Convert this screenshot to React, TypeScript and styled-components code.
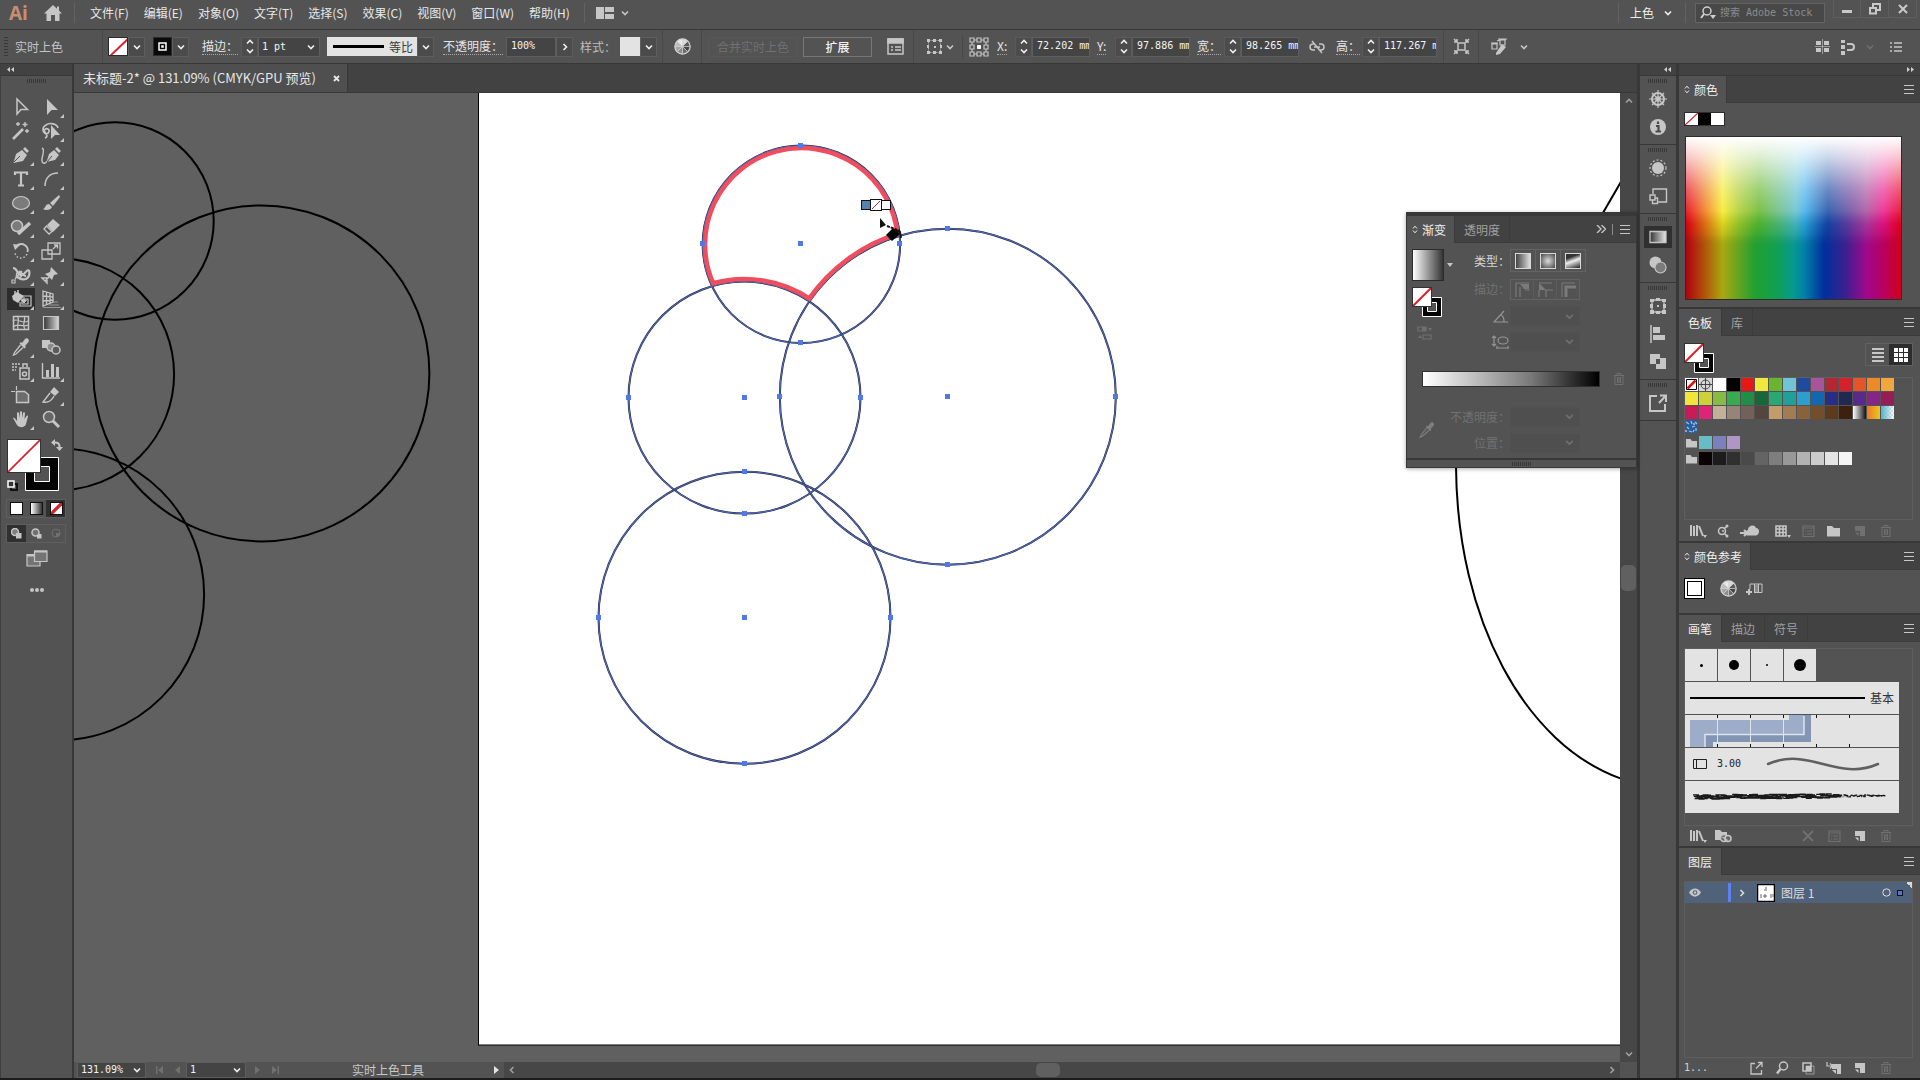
import React from "react";
import styled, { createGlobalStyle, css } from "styled-components";

/* ---------- tokens ---------- */

const c = {
  panel: "#535353",
  bar: "#424242",
  line: "#383838",
  field: "#444444",
  canvas: "#606060",
  text: "#e2e2e2",
  dim: "#a0a0a0",
  off: "#707070",
  icon: "#c6c6c6",
  anchor: "#5078e6",
};

const ui = `"Noto Sans CJK SC", "Noto Sans", sans-serif`;
const mono = `"DejaVu Sans Mono", "Noto Sans CJK SC", monospace`;

const GlobalStyle = createGlobalStyle`
  *, *::before, *::after { box-sizing: border-box; }
  html, body, #root { height: 100%; }
  body { margin: 0; background: ${c.panel}; overflow: hidden; }
  button, input, select { font: inherit; color: inherit; margin: 0; padding: 0; border: 0; background: none; border-radius: 0; }
  select { appearance: none; }
  svg { display: block; flex: none; }
`;

/* ---------- frame ---------- */

const Shell = styled.div`
  height: 100vh;
  display: flex;
  flex-direction: column;
  background: ${c.panel};
  border-bottom: 2px solid #1c1c1c;
  color: ${c.text};
  font: 12px/16px ${ui};
`;

const MenuBar = styled.header`
  display: flex;
  align-items: center;
  height: 30px;
  flex: none;
  padding: 0 3px 4px 9px;
  border-bottom: 1px solid ${c.line};
`;

const ControlBar = styled.div`
  display: flex;
  align-items: center;
  height: 34px;
  flex: none;
  padding: 0 14px 0 4px;
  border-bottom: 1px solid ${c.line};
  white-space: nowrap;
`;

const Workspace = styled.div`
  flex: 1;
  min-height: 0;
  display: grid;
  grid-template-columns: 74px minmax(0, 1fr) 39px 244px;
`;

/* ---------- shared pieces ---------- */

const Group = styled.div<{ $ml?: number; $gap?: number }>`
  display: flex;
  align-items: center;
  flex: none;
  margin-left: ${(p) => p.$ml ?? 0}px;
  gap: ${(p) => p.$gap ?? 0}px;
`;

const PushRight = styled(Group)`
  margin-left: auto;
`;

const Rule = styled.span<{ $h?: number; $light?: boolean }>`
  width: 1px;
  height: ${(p) => p.$h ?? 33}px;
  background: ${(p) => (p.$light ? "#626262" : "#484848")};
`;

const Grip = styled.span<{ $vertical?: boolean }>`
  flex: none;
  ${(p) =>
    p.$vertical
      ? css`
          width: 4px;
          height: 19px;
          background: repeating-linear-gradient(${c.line} 0 1px, transparent 1px 3px);
        `
      : css`
          width: 20px;
          height: 4px;
          background: repeating-linear-gradient(90deg, ${c.line} 0 1px, transparent 1px 2px);
        `}
`;

const IconButton = styled.button<{ $w?: number; $h?: number; $off?: boolean }>`
  display: grid;
  place-items: center;
  flex: none;
  width: ${(p) => p.$w ?? 20}px;
  height: ${(p) => p.$h ?? 20}px;
  color: ${(p) => (p.$off ? c.off : c.icon)};
`;

const TextButton = styled.button<{ $w: number; $off?: boolean }>`
  width: ${(p) => p.$w}px;
  height: 20px;
  line-height: 16px;
  border: 1px solid ${(p) => (p.$off ? "#575757" : "#777777")};
  color: ${(p) => (p.$off ? c.off : "#f2f2f2")};
  font-weight: ${(p) => (p.$off ? 400 : 500)};
`;

const FieldLabel = styled.label<{ $plain?: boolean }>`
  line-height: 16px;
  color: ${(p) => (p.$plain ? "#bdbdbd" : "#e6e6e6")};
  border-bottom: ${(p) => (p.$plain ? "0" : "1px dotted #a8a8a8")};
`;

const ChevButton = styled.button`
  display: grid;
  place-items: center;
  width: 17px;
  height: 20px;
  border: 1px solid #5e5e5e;
  color: #efefef;
  background: #4b4b4b;
`;

const NumberBox = styled.input<{ $w: number }>`
  width: ${(p) => p.$w}px;
  height: 20px;
  padding: 0 0 2px 4px;
  border: 1px solid #5e5e5e;
  background: ${c.field};
  color: #f4f4f4;
  font: 10px/16px ${mono};
`;

const StepBox = styled.span`
  display: flex;
  flex-direction: column;
  width: 17px;
  height: 20px;
  border: 1px solid #5a5a5a;
  background: #4c4c4c;
`;

const StepButton = styled.button`
  display: grid;
  place-items: center;
  height: 9px;
  color: #f0f0f0;
`;

const SelectFrame = styled.span<{ $w: number; $chev?: number; $h?: number; $bare?: boolean; $off?: boolean }>`
  display: grid;
  grid-template-columns: 1fr ${(p) => p.$chev ?? 17}px;
  align-items: center;
  width: ${(p) => p.$w}px;
  height: ${(p) => p.$h ?? 20}px;
  color: ${(p) => (p.$off ? "#6e6e6e" : "#efefef")};
  background: ${(p) => (p.$bare ? "none" : p.$off ? "#4f4f4f" : c.field)};
  border: ${(p) => (p.$bare ? "0" : p.$off ? "1px solid #515151" : "1px solid #5e5e5e")};
  select {
    grid-area: 1 / 1 / 2 / 3;
    width: 100%;
    height: 100%;
    padding-left: 3px;
    outline: none;
  }
  svg {
    grid-area: 1 / 2;
    justify-self: center;
    pointer-events: none;
  }
`;

const MonoSelectFrame = styled(SelectFrame)`
  select {
    font: 10px/14px ${mono};
    color: #f4f4f4;
  }
`;

type SvgProps = { w?: number; h?: number; box?: string; children?: React.ReactNode };
const Svg = ({ w = 20, h = w, box = "0 0 20 20", children }: SvgProps) => (
  <svg width={w} height={h} viewBox={box} fill="none" stroke="currentColor" strokeWidth="1.5" aria-hidden="true">
    {children}
  </svg>
);

const Chevron = ({ dir = "down", size = 8 }: { dir?: "down" | "up" | "left" | "right"; size?: number }) => {
  const turn = { down: 0, left: 90, up: 180, right: 270 }[dir];
  return (
    <Svg w={size} box="0 0 8 8">
      <path d="M1 2.5 4 5.5 7 2.5" strokeWidth="1.6" transform={`rotate(${turn} 4 4)`} />
    </Svg>
  );
};

const Stepper = ({ name }: { name: string }) => (
  <StepBox>
    <StepButton aria-label={`${name} +`}>
      <Chevron dir="up" />
    </StepButton>
    <StepButton aria-label={`${name} -`}>
      <Chevron />
    </StepButton>
  </StepBox>
);

const NoneSwatch = ({ w, h = w, weight = 2 }: { w: number; h?: number; weight?: number }) => (
  <svg width={w} height={h} viewBox="0 0 20 20" preserveAspectRatio="none" aria-hidden="true">
    <rect width="20" height="20" fill="#fff" />
    <path d="M0 20 20 0" stroke="#d8202c" strokeWidth={weight} />
  </svg>
);

const ColorWheel = ({ size = 17 }: { size?: number }) => (
  <Svg w={size} box="-10 -10 20 20">
    <circle r="9" fill="#8a8a8a" stroke="#cfcfcf" strokeWidth="1.5" />
    {["#dadada", "#5a5a5a", "#474747", "#6c6c6c", "#8d8d8d", "#a5a5a5", "#bcbcbc", "#e8e8e8"].map((f, i) => (
      <path key={f} d="M0 0 0-8.5A8.5 8.5 0 0 1 6-6Z" fill={f} stroke="#d5d5d5" strokeWidth=".7" transform={`rotate(${i * 45})`} />
    ))}
  </Svg>
);

const FillStroke = styled.span<{ $s: number; $shift: number }>`
  display: grid;
  width: ${(p) => p.$s + p.$shift}px;
  height: ${(p) => p.$s + p.$shift}px;
  > * {
    grid-area: 1 / 1;
  }
  > :first-child {
    margin: ${(p) => p.$shift}px 0 0 ${(p) => p.$shift}px;
  }
  > :last-child {
    outline: 1px solid #333;
    outline-offset: -1px;
  }
`;

const StrokeSquare = ({ s }: { s: number }) => {
  const a = Math.round(s / 4) + 0.5;
  const b = s - a;
  return (
    <svg width={s} height={s} viewBox={`0 0 ${s} ${s}`} aria-hidden="true">
      <path
        fillRule="evenodd"
        fill="#050505"
        stroke="#fff"
        d={`M.5 .5H${s - 0.5}V${s - 0.5}H.5ZM${a} ${a}H${b}V${b}H${a}Z`}
      />
    </svg>
  );
};

const Proxy = ({ size, shift, weight = 2 }: { size: number; shift: number; weight?: number }) => (
  <FillStroke $s={size} $shift={shift}>
    <StrokeSquare s={size} />
    <NoneSwatch w={size} weight={weight} />
  </FillStroke>
);

/* ---------- menu bar ---------- */

const Logo = styled.span`
  width: 34px;
  color: #c98e72;
  font: 700 19px/20px "Open Sans", "Noto Sans", sans-serif;
`;

const Menu = styled.nav`
  display: flex;
  gap: 15px;
  margin-left: 15px;
`;

const MenuItem = styled.button`
  line-height: 18px;
  color: #e8e8e8;
`;

const SearchBox = styled.label`
  display: flex;
  align-items: center;
  gap: 3px;
  width: 130px;
  height: 20px;
  padding-left: 4px;
  border: 1px solid #646464;
  background: #484848;
  color: #cfcfcf;
  input {
    width: 100px;
    outline: none;
    font: 10px/14px ${mono};
  }
  input::placeholder {
    color: #8c8c8c;
    opacity: 1;
  }
`;

const WindowButtons = styled.div`
  display: flex;
  align-self: flex-start;
  margin-left: 8px;
  color: #c9c9c9;
`;

const WindowButton = styled.button`
  display: grid;
  place-items: center;
  width: 28px;
  height: 18px;
  border: 1px solid #5e5e5e;
  border-top: 0;
  & + & {
    border-left: 0;
  }
`;

const MENUS = ["文件(F)", "编辑(E)", "对象(O)", "文字(T)", "选择(S)", "效果(C)", "视图(V)", "窗口(W)", "帮助(H)"];

const TopMenu = () => (
  <MenuBar>
    <Logo>Ai</Logo>
    <IconButton aria-label="主页">
      <Svg w={18} box="0 0 18 18">
        <path d="M9 1 0 9.5H2.5V17H7V11h4v6h4.5V9.5H18L15 6.6V2.5H13v2.3Z" fill="currentColor" stroke="none" />
      </Svg>
    </IconButton>
    <Group $ml={11}>
      <Rule $h={20} $light />
    </Group>
    <Menu>
      {MENUS.map((m) => (
        <MenuItem key={m}>{m}</MenuItem>
      ))}
    </Menu>
    <Group $ml={14} $gap={11}>
      <Rule $h={20} $light />
      <IconButton $w={18} aria-label="排列文档">
        <Svg w={18} h={12} box="0 0 18 12">
          <path d="M0 0H8V12H0ZM9 0H18V5H9ZM9 7H18V12H9Z" fill="currentColor" stroke="none" />
        </Svg>
      </IconButton>
    </Group>
    <IconButton $w={22} aria-label="排列选项">
      <Chevron />
    </IconButton>
    <PushRight>
      <Rule $h={20} $light />
      <Group $ml={8}>
        <SelectFrame $w={48} $chev={14} $bare>
          <select aria-label="工作区" defaultValue="上色">
            <option>上色</option>
          </select>
          <Chevron />
        </SelectFrame>
      </Group>
      <Group $ml={10} $gap={9}>
        <Rule $h={20} $light />
        <SearchBox>
          <Svg w={17} h={14} box="0 0 17 14">
            <circle cx="7" cy="5" r="4" />
            <path d="M4 8 1 12" strokeWidth="2" />
            <path d="M10 9h6l-3 4Z" fill="currentColor" stroke="none" />
          </Svg>
          <input placeholder="搜索 Adobe Stock" aria-label="搜索 Adobe Stock" />
        </SearchBox>
      </Group>
    </PushRight>
    <WindowButtons>
      <WindowButton aria-label="最小化">
        <Svg w={10} box="0 0 10 10">
          <path d="M0 7.5H10" strokeWidth="3" />
        </Svg>
      </WindowButton>
      <WindowButton aria-label="还原">
        <Svg w={12} box="0 0 12 12">
          <path d="M4 4V1H11V7H8M1 5H7V10.5H1Z" strokeWidth="2" />
        </Svg>
      </WindowButton>
      <WindowButton aria-label="关闭">
        <Svg w={10} box="0 0 10 10">
          <path d="M1 1 9 9M9 1 1 9" strokeWidth="2" />
        </Svg>
      </WindowButton>
    </WindowButtons>
  </MenuBar>
);

/* ---------- control bar ---------- */

const BarTitle = styled.h1`
  margin: 0;
  width: 87px;
  font: inherit;
  color: #c4c4c4;
`;

const SwatchButton = styled.button<{ $w: number }>`
  display: grid;
  place-items: center;
  width: ${(p) => p.$w}px;
  height: 19px;
  border: 1px solid #2b2b2b;
  overflow: hidden;
  background: #0a0a0a;
`;

const ProfileButton = styled.button`
  display: flex;
  align-items: center;
  gap: 5px;
  width: 90px;
  height: 19px;
  padding: 0 4px 0 6px;
  background: #e3e3e3;
  color: #3c3c3c;
  &::before {
    content: "";
    flex: 1;
    height: 3px;
    background: #000;
  }
`;

const StyleSwatch = styled.button`
  width: 20px;
  height: 19px;
  background: #e3e3e3;
`;

const Measure = ({ id, label, value }: { id: string; label: string; value: string }) => (
  <>
    <FieldLabel htmlFor={id}>{label}</FieldLabel>
    <Group>
      <Stepper name={label} />
      <NumberBox id={id} $w={58} defaultValue={value} />
    </Group>
  </>
);

const MeasureGroup = styled.div<{ $label: number; $ml: number }>`
  display: grid;
  grid-template-columns: ${(p) => p.$label}px auto;
  align-items: center;
  margin-left: ${(p) => p.$ml}px;
  label {
    justify-self: start;
  }
`;

const ControlStrip = () => (
  <ControlBar>
    <Grip $vertical />
    <Group $ml={7}>
      <BarTitle>实时上色</BarTitle>
      <Rule />
    </Group>
    <Group $ml={5}>
      <SwatchButton $w={20} aria-label="填色">
        <NoneSwatch w={20} h={19} />
      </SwatchButton>
      <ChevButton aria-label="填色选项">
        <Chevron />
      </ChevButton>
    </Group>
    <Group $ml={8}>
      <SwatchButton $w={19} aria-label="描边颜色">
        <Svg w={9} box="0 0 9 9">
          <path d="M1 1H8V8H1ZM4 4H5V5H4Z" stroke="#fff" />
        </Svg>
      </SwatchButton>
      <ChevButton aria-label="描边颜色选项">
        <Chevron />
      </ChevButton>
    </Group>
    <Group $ml={13} $gap={3}>
      <FieldLabel htmlFor="weight">描边：</FieldLabel>
      <Group>
        <Stepper name="描边粗细" />
        <MonoSelectFrame $w={62}>
          <select id="weight" defaultValue="1 pt">
            <option>1 pt</option>
          </select>
          <Chevron />
        </MonoSelectFrame>
      </Group>
    </Group>
    <Group $ml={7}>
      <ProfileButton>等比</ProfileButton>
      <ChevButton aria-label="宽度配置文件">
        <Chevron />
      </ChevButton>
    </Group>
    <Group $ml={9} $gap={3}>
      <FieldLabel htmlFor="opacity">不透明度：</FieldLabel>
      <Group>
        <NumberBox id="opacity" $w={50} defaultValue="100%" />
        <ChevButton aria-label="不透明度滑块">
          <Chevron dir="right" />
        </ChevButton>
      </Group>
    </Group>
    <Group $ml={7} $gap={4}>
      <FieldLabel $plain htmlFor="style">
        样式：
      </FieldLabel>
      <Group>
        <StyleSwatch id="style" aria-label="图形样式" />
        <ChevButton aria-label="样式选项">
          <Chevron />
        </ChevButton>
      </Group>
    </Group>
    <Group $ml={5} $gap={9}>
      <Rule />
      <IconButton aria-label="重新着色图稿">
        <ColorWheel />
      </IconButton>
      <Rule />
    </Group>
    <Group $ml={6} $gap={5}>
      <TextButton $w={90} $off disabled>
        合并实时上色
      </TextButton>
      <TextButton $w={69}>扩展</TextButton>
    </Group>
    <Group $ml={13} $gap={8}>
      <IconButton aria-label="间隙选项">
        <Svg w={17} box="0 0 17 17">
          <path d="M1 1H16V16H1Z" />
          <path d="M1 1H16V5H1Z" fill="currentColor" />
          <path d="M4 9H6M8 9h6M4 12H6M8 12h6" />
        </Svg>
      </IconButton>
      <Rule />
    </Group>
    <Group $ml={10}>
      <IconButton aria-label="对齐">
        <Svg w={17} box="0 0 17 17">
          <path d="M2.5 2.5H14.5V14.5H2.5Z" strokeWidth="1" strokeDasharray="2 1" opacity=".8" />
          <path d="M1 1H4V4H1ZM7 1h3V4H7ZM13 1h3V4H13ZM1 13H4v3H1ZM7 13h3v3H7ZM13 13h3v3H13ZM1 7H3v3H1ZM14 7h2v3H14ZM8 8h2v2H8Z" fill="currentColor" stroke="none" />
        </Svg>
      </IconButton>
      <IconButton $w={12} aria-label="对齐选项">
        <Chevron />
      </IconButton>
    </Group>
    <Group $ml={6} $gap={5}>
      <Rule $h={24} />
      <IconButton $w={22} aria-label="参考点">
        <Svg w={20} box="0 0 20 20">
          <path d="M1 1H5V5H1ZM8 1h4V5H8ZM15 1h4V5H15ZM1 8H5v4H1ZM15 8h4v4H15ZM1 15H5v4H1ZM8 15h4v4H8ZM15 15h4v4H15ZM5 3H8M12 3h3M3 5V8M17 5V8M3 12v3M17 12v3M5 17H8M12 17h3" strokeWidth="1.2" />
          <path d="M8.5 8.5h3v3H8.5Z" fill="#fff" stroke="#fff" strokeWidth="1" />
        </Svg>
      </IconButton>
    </Group>
    <MeasureGroup $label={18} $ml={7}>
      <Measure id="mx" label="X:" value="72.202 mm" />
    </MeasureGroup>
    <MeasureGroup $label={18} $ml={7}>
      <Measure id="my" label="Y:" value="97.886 mm" />
    </MeasureGroup>
    <MeasureGroup $label={27} $ml={7}>
      <Measure id="mw" label="宽：" value="98.265 mm" />
    </MeasureGroup>
    <Group $ml={8}>
      <IconButton aria-label="约束宽度和高度比例">
        <Svg w={16} box="0 0 16 16">
          <path d="M6 5H4a3 3 0 0 0 0 6H6M10 5h2a3 3 0 0 1 0 6H10M5 8h6M3 2 13 14" />
        </Svg>
      </IconButton>
    </Group>
    <MeasureGroup $label={26} $ml={9}>
      <Measure id="mh" label="高：" value="117.267 mm" />
    </MeasureGroup>
    <Group $ml={6} $gap={7}>
      <Rule />
      <IconButton aria-label="隔离选中的组">
        <Svg w={17} box="0 0 17 17">
          <path d="M5 5h7v7H5Z" />
          <path d="M1 1 4 4M16 1 13 4M1 16l3-3M16 16l-3-3M4 1V4H1M13 1V4h3M4 16V13H1M13 16V13h3" />
        </Svg>
      </IconButton>
      <Rule />
    </Group>
    <Group $ml={10} $gap={9}>
      <IconButton aria-label="选择类似对象">
        <Svg w={18} box="0 0 18 18">
          <path d="M2 6H7v5H2ZM10 2h5V7H10ZM1 5H8M7 3l3-1M8 1h9" strokeWidth="1.2" />
          <path d="M6 15 12 6l4 3-6 7-4 1Z" fill="currentColor" stroke="none" />
        </Svg>
      </IconButton>
      <IconButton $w={12} aria-label="类似对象选项">
        <Chevron />
      </IconButton>
    </Group>
    <PushRight $gap={6}>
      <IconButton aria-label="对齐像素网格">
        <Svg w={15} box="0 0 15 15">
          <path d="M1 2h5v4H1ZM9 2h5v4H9ZM1 9h5v4H1ZM9 9h5v4H9Z" fill="currentColor" stroke="none" />
          <path d="M7.5 0V15M0 7.5H15" strokeWidth="1" opacity=".6" />
        </Svg>
      </IconButton>
      <IconButton aria-label="贴齐">
        <Svg w={16} box="0 0 16 16">
          <path d="M1 1H5V4H1ZM1 6H5v4H1ZM1 12H5v4H1Z" fill="currentColor" stroke="none" />
          <path d="M7 5h4a3 3 0 0 1 0 6H7" strokeWidth="2" />
        </Svg>
      </IconButton>
      <IconButton $w={12} $off aria-label="贴齐选项">
        <Chevron />
      </IconButton>
      <Group $ml={4}>
        <IconButton aria-label="控制面板菜单">
          <Svg w={12} box="0 0 12 12">
            <path d="M0 2H2M4 2h8M0 6H2M4 6h8M0 10H2M4 10h8" strokeWidth="1.5" />
          </Svg>
        </IconButton>
      </Group>
    </PushRight>
  </ControlBar>
);

/* ---------- tool box ---------- */

const ToolColumn = styled.aside`
  display: flex;
  flex-direction: column;
  border-right: 2px solid ${c.line};
  border-left: 1px solid #404040;
`;

const StripHeader = styled.div<{ $end?: boolean; $pad?: number }>`
  display: flex;
  align-items: center;
  justify-content: ${(p) => (p.$end ? "flex-end" : "flex-start")};
  height: 12px;
  flex: none;
  padding: 0 ${(p) => p.$pad ?? 5}px;
  background: ${c.bar};
  border-bottom: 1px solid ${c.line};
  color: #d0d0d0;
`;

const Collapse = ({ right }: { right?: boolean }) => (
  <Svg w={8} h={5} box="0 0 8 5">
    <path
      d="M4 0V5L1 2.5ZM8 0V5L5 2.5Z"
      fill="currentColor"
      stroke="none"
      transform={right ? "rotate(180 4.5 2.5)" : undefined}
    />
  </Svg>
);

const GripRow = styled.div`
  display: grid;
  place-items: center;
  height: 9px;
`;

const ToolGrid = styled.div`
  display: grid;
  grid-template-columns: 30px 30px;
  grid-auto-rows: 24px;
  padding: 10px 5px 0;
`;

const ToolCell = styled.button<{ $on?: boolean }>`
  display: grid;
  place-items: center;
  margin: 1px;
  color: ${c.icon};
  background: ${(p) => (p.$on ? "#2d2d2d" : "none")};
`;

const SMALL_TRI = <path d="M23 17V21H19Z" fill="currentColor" stroke="none" />;

const fill = { fill: "currentColor", stroke: "none" } as const;

const DropperArt = () => (
  <>
    <path d="m11 6 3-4c2-2 5 1 3.5 3L14 9l1 1-1.5 1.5-5-5L10 5Z" {...fill} />
    <path d="m9.5 8-6 7.5L2.500 18 5 17l7-6.5" strokeWidth="1.3" />
  </>
);

const TOOLS: { name: string; more?: boolean; art: React.ReactNode }[] = [
  { name: "选择工具", art: <path d="M6 2V17L10 12.5H16.5Z" /> },
  { name: "直接选择工具", more: true, art: <path d="M6 2V18L10.5 13H17Z" {...fill} /> },
  {
    name: "魔棒工具",
    art: (
      <>
        <path d="M2 18 12 8" strokeWidth="2.6" />
        <path d="M7 1v4M5 3h4M14 1v5M11.5 3.5h5M16 8v4M14 10h4" strokeWidth="1.4" />
      </>
    ),
  },
  {
    name: "套索工具",
    more: true,
    art: (
      <>
        <path d="M5 13C1 11 1 6 5 4c4-3 11-1 12 3M5 13c3 0 4-4 2-5s-5 1-3 3 3 5 0 6" strokeWidth="1.6" />
        <path d="M10 4V18L14 14H19Z" {...fill} />
      </>
    ),
  },
  {
    name: "钢笔工具",
    more: true,
    art: (
      <>
        <path d="M2.5 18 5 9l6-4 5 5-4 6Z" {...fill} />
        <path d="M12 4 14 2l4 4-2 2Z" {...fill} />
        <path d="M3 17 9 11" stroke={c.panel} strokeWidth="1" />
      </>
    ),
  },
  {
    name: "曲率工具",
    more: true,
    art: (
      <>
        <path d="M1 3C5 5 0 12 1 16s4 2 5 0" strokeWidth="1.4" />
        <path d="M5.5 17 8 9l5-4 5 5-4 5Z" {...fill} />
        <path d="M14 4 16 2l4 4-2 2Z" {...fill} />
        <path d="M6 17l5-6" stroke={c.panel} strokeWidth="1" />
      </>
    ),
  },
  {
    name: "文字工具",
    more: true,
    art: <path d="M4 6V3.5H16V6M10 3.5V16M7 16.5h6" strokeWidth="2.2" />,
  },
  { name: "弧形工具", more: true, art: <path d="M4 17C4 9 9 4 17 4" /> },
  { name: "椭圆工具", more: true, art: <ellipse cx="10" cy="10" rx="8.5" ry="6.5" fill="#7b7b7b" strokeWidth="1.2" /> },
  {
    name: "画笔工具",
    more: true,
    art: (
      <>
        <path d="M18 2 9 10l3 3 7-9Z" {...fill} />
        <path d="M8 11c-4 0-3 4-6 5 3 2 8 1 9-2Z" {...fill} />
      </>
    ),
  },
  {
    name: "Shaper 工具",
    more: true,
    art: (
      <>
        <circle cx="6" cy="9" r="5.5" fill="#7b7b7b" />
        <path d="M7 17 19 6" strokeWidth="3.6" />
      </>
    ),
  },
  {
    name: "橡皮擦工具",
    more: true,
    art: (
      <>
        <path d="M6 8 12 2l7 6-7 7Z" {...fill} />
        <path d="M5.5 9 3 12l5 5 3-2.5Z" strokeWidth="1.3" />
      </>
    ),
  },
  {
    name: "旋转工具",
    more: true,
    art: (
      <>
        <path d="M5 5C12 0 18 6 16.5 11" strokeWidth="1.8" />
        <path d="M2 3 9 4 4 9Z" {...fill} />
        <path d="M16 13c-3 6-11 5-12-1" strokeDasharray="1.5 2" />
      </>
    ),
  },
  {
    name: "比例缩放工具",
    more: true,
    art: (
      <>
        <path d="M7 2H19V13H7ZM1 9h10v9H1Z" strokeWidth="1.3" />
        <path d="m12 8 4-4M13 4h3.500V7.500" strokeWidth="1.3" />
      </>
    ),
  },
  {
    name: "宽度工具",
    more: true,
    art: (
      <>
        <path d="M2 3c5 0 3 6 8 7 4 1 4-5 8-5M18 5c1 4 1 7-3 9-4 1-8-1-10-3" strokeWidth="2.2" />
        <path d="M8 6c3 3 5 5 7 5" strokeWidth="2.2" />
        <circle cx="8" cy="10" r="2.5" />
        <path d="M1 15h3v3H1ZM4 14 11 6" strokeWidth="1.2" />
      </>
    ),
  },
  {
    name: "操控变形工具",
    more: true,
    art: (
      <>
        <path d="m10 2 7 7-4 1-2 5-3-3-4-3 5-2Z" {...fill} />
        <path d="M8 12 4 16M1 13h5v5Z" strokeWidth="1.4" />
      </>
    ),
  },
  {
    name: "实时上色工具",
    more: true,
    art: (
      <>
        <path d="M1 7 6 3l7 4-6 7-5-3Z" {...fill} />
        <path d="M4 2v4M7 1v4" />
        <path d="M12 7h8v10H9V13M11 10h6v5h-6Z" strokeWidth="1.2" />
        <path d="M13 8v5M10.5 11l2.5 3 2.500-3Z" fill="currentColor" strokeWidth="1" />
      </>
    ),
  },
  {
    name: "透视网格工具",
    more: true,
    art: (
      <>
        <path d="M2 2V17L12 13V5ZM2 7l10 1M2 12l10-1M5.5 3v12.500M9 4v10" strokeWidth="1.3" />
        <path d="M12 13h5M8 16h10M2 18.5H20" strokeWidth="1" opacity=".6" />
      </>
    ),
  },
  {
    name: "网格工具",
    art: (
      <>
        <path d="M2.5 3.5h15v13h-15Z" />
        <path d="M2 8c5-4 9 4 15 0M2 14c5-5 9 1 15-2M6 3c4 4-1 8 1 13M13 3c3 4-3 8 1 13" strokeWidth="1.2" />
      </>
    ),
  },
  {
    name: "渐变工具",
    art: (
      <>
        <defs>
          <linearGradient id="toolGrad">
            <stop offset="0" stopColor="#333" />
            <stop offset="1" stopColor="#d8d8d8" />
          </linearGradient>
        </defs>
        <path d="M2.5 3.5h15v13h-15Z" fill="url(#toolGrad)" strokeWidth="1.2" />
      </>
    ),
  },
  { name: "吸管工具", more: true, art: <DropperArt /> },
  {
    name: "混合工具",
    art: (
      <>
        <path d="M1 3h8v8H1Z" {...fill} />
        <circle cx="10" cy="10" r="4" fill="#8a8a8a" />
        <circle cx="15" cy="13" r="4" fill="#5a5a5a" />
      </>
    ),
  },
  {
    name: "符号喷枪工具",
    more: true,
    art: (
      <>
        <path d="M9 7h9v11H9ZM12 6V3h4v3" />
        <circle cx="13.5" cy="13" r="2" />
        <path d="M1 3h8M1 6h6M1 9h4" strokeDasharray="2 1" />
      </>
    ),
  },
  {
    name: "柱形图工具",
    more: true,
    art: (
      <>
        <path d="M1.5 2V17H19" strokeWidth="1.4" />
        <path d="M5 9h3v7H5ZM10 3h3V16H10ZM15 6h3V16H15Z" {...fill} />
      </>
    ),
  },
  {
    name: "画板工具",
    art: (
      <>
        <path d="M5.5 6.5h8l4 3v8h-12Z" fill="#6d6d6d" />
        <path d="M0 6.5H4M5.5 1V5" strokeWidth="1.2" />
      </>
    ),
  },
  {
    name: "切片工具",
    more: true,
    art: (
      <>
        <path d="M13 2 18 7l-4 4-5-4Z" {...fill} />
        <path d="M9 8 2 17c5 1 9-2 11-6" strokeWidth="1.4" />
      </>
    ),
  },
  {
    name: "抓手工具",
    more: true,
    art: <path d="M2 9c1-1 2 0 4 3V4c0-1 2-1 2 0l.5 5L9 3c0-1 2-1 2 0v6l1-5c0-1 2-1 2 0l-.5 6L15.500 7c.5-1 2-.5 1.500.5L15 15c-1 4-7 4-9 1Z" {...fill} />,
  },
  {
    name: "缩放工具",
    art: (
      <>
        <circle cx="8" cy="8" r="5.5" fill="#666" />
        <path d="m12 12 6 6" strokeWidth="3" />
      </>
    ),
  },
];

const ColorArea = styled.div`
  display: grid;
  grid-template-columns: 44px auto;
  padding: 8px 6px 0;
`;

const ProxyCell = styled.div`
  grid-area: 1 / 1 / 2 / 3;
`;

const SwapCell = styled.div`
  grid-area: 1 / 2;
  color: ${c.icon};
`;

const DefaultIcon = styled.button`
  grid-area: 1 / 1;
  align-self: end;
  justify-self: start;
  width: 11px;
  height: 11px;
`;

const ModeRow = styled.div<{ $top: number }>`
  display: grid;
  grid-template-columns: repeat(3, 20px);
  height: 19px;
  width: 60px;
  margin: ${(p) => p.$top}px 0 0 5px;
  outline: 1px solid #5f5f5f;
  outline-offset: -1px;
`;

const ModeCell = styled.button<{ $on?: boolean; $off?: boolean }>`
  display: grid;
  place-items: center;
  color: ${(p) => (p.$off ? c.off : c.icon)};
  background: ${(p) => (p.$on ? "#303030" : "none")};
`;

const Chip = styled.span<{ $bg: string }>`
  display: block;
  width: 13px;
  height: 13px;
  border: 1px solid #111;
  background: ${(p) => p.$bg};
  overflow: hidden;
`;

const CenterRow = styled.div<{ $h: number }>`
  display: grid;
  place-items: center;
  height: ${(p) => p.$h}px;
  color: ${c.icon};
`;

const DrawMode = ({ solid }: { solid?: boolean }) => (
  <Svg w={11} box="0 0 11 11">
    {solid ? (
      <>
        <circle cx="4" cy="4" r="3.5" fill="#808080" />
        <path d="M5 5h5.5v5.5H5Z" {...fill} />
      </>
    ) : (
      <>
        <path d="M6 6h4.500v4.500H6Z" {...fill} />
        <circle cx="4.500" cy="4.500" r="3.5" fill="#707070" />
      </>
    )}
  </Svg>
);

const Toolbox = () => (
  <ToolColumn>
    <StripHeader>
      <Collapse />
    </StripHeader>
    <GripRow>
      <Grip />
    </GripRow>
    <ToolGrid>
      {TOOLS.map((t) => (
        <ToolCell key={t.name} aria-label={t.name} $on={t.name === "实时上色工具"}>
          <Svg w={28} h={22} box="-4 -1 28 22">
            {t.art}
            {t.more && SMALL_TRI}
          </Svg>
        </ToolCell>
      ))}
    </ToolGrid>
    <ColorArea>
      <ProxyCell>
        <Proxy size={34} shift={18} weight={1} />
      </ProxyCell>
      <DefaultIcon aria-label="默认填色和描边">
        <Svg w={11} box="0 0 11 11">
          <path d="M4 4h6v6H4Z" stroke="#111" strokeWidth="2" />
          <path d="M1 1H7V7H1Z" fill="#333" stroke="#fff" strokeWidth="1.5" />
        </Svg>
      </DefaultIcon>
      <SwapCell>
        <Svg w={12} box="0 0 12 12">
          <path d="M3 3.500C7 3 9 5 8.500 9" strokeWidth="2" />
          <path d="M0 3.500 4 0V7ZM5 8h7L8.500 12Z" {...fill} />
        </Svg>
      </SwapCell>
    </ColorArea>
    <ModeRow $top={8}>
      <ModeCell aria-label="颜色">
        <Chip $bg="#fff" />
      </ModeCell>
      <ModeCell aria-label="渐变">
        <Chip $bg="linear-gradient(90deg,#fff,#333)" />
      </ModeCell>
      <ModeCell $on aria-label="无">
        <Chip $bg="#fff">
          <NoneSwatch w={11} weight={6} />
        </Chip>
      </ModeCell>
    </ModeRow>
    <ModeRow $top={6}>
      <ModeCell $on aria-label="正常绘图">
        <DrawMode solid />
      </ModeCell>
      <ModeCell aria-label="背面绘图">
        <DrawMode />
      </ModeCell>
      <ModeCell $off aria-label="内部绘图">
        <Svg w={11} box="0 0 11 11">
          <circle cx="5" cy="5" r="4" strokeWidth="1" />
          <path d="M5 5h4v2l-2 2H5Z" {...fill} />
        </Svg>
      </ModeCell>
    </ModeRow>
    <CenterRow $h={30}>
      <Svg w={22} h={17} box="0 0 22 17">
        <path d="M1 4.500h13V16H1Z" fill="#747474" strokeWidth="1.2" />
        <path d="M8.500 1H21V11.500H8.500Z" fill="#747474" strokeWidth="1.2" />
        <path d="M8.500 1.500H21M1 5.500H8" strokeWidth="2" />
      </Svg>
    </CenterRow>
    <CenterRow $h={33}>
      <Svg w={14} h={4} box="0 0 14 4">
        <circle cx="2" cy="2" r="2" {...fill} />
        <circle cx="7" cy="2" r="2" {...fill} />
        <circle cx="12" cy="2" r="2" {...fill} />
      </Svg>
    </CenterRow>
  </ToolColumn>
);

/* ---------- document ---------- */

const DocumentArea = styled.main`
  position: relative;
  min-width: 0;
  display: flex;
  flex-direction: column;
`;

const TabStrip = styled.div`
  display: flex;
  height: 29px;
  flex: none;
  background: ${c.bar};
  border-bottom: 1px solid ${c.line};
`;

const DocTab = styled.div`
  display: flex;
  align-items: center;
  gap: 16px;
  padding: 0 5px 0 9px;
  background: #4f4f4f;
  color: #e6e6e6;
  font-size: 13px;
  border-right: 1px solid ${c.line};
`;

const Stage = styled.div`
  flex: 1;
  min-height: 0;
  display: grid;
  grid-template-columns: minmax(0, 1fr) 17px;
`;

const Canvas = styled.div`
  background: ${c.canvas};
  overflow: hidden;
  min-height: 0;
`;

const VScroll = styled.div`
  display: flex;
  flex-direction: column;
  align-items: center;
  background: #474747;
  padding: 4px 0;
  color: ${c.dim};
`;

const Spacer = styled.span<{ $n?: number }>`
  flex: ${(p) => p.$n ?? 1};
`;

const VThumb = styled.span`
  width: 15px;
  height: 26px;
  border-radius: 5px;
  background: #606060;
`;

const HThumb = styled.span`
  width: 24px;
  height: 14px;
  border-radius: 5px;
  background: #606060;
`;

const StatusBar = styled.footer`
  display: flex;
  align-items: center;
  height: 16px;
  flex: none;
  padding-right: 17px;
  padding-left: 3px;
  color: #e0e0e0;
`;

const StatusText = styled.span`
  width: 207px;
  padding-left: 69px;
  color: #c8c8c8;
  line-height: 18px;
`;

const HScroll = styled.div`
  flex: 1;
  display: flex;
  align-items: center;
  height: 16px;
  padding: 0 4px;
  background: #474747;
  color: ${c.dim};
`;

const ARTBOARD_CIRCLES = [
  { x: 801.4, y: 244.3, r: 98.7 },
  { x: 947.8, y: 396.7, r: 168 },
  { x: 744.5, y: 397.6, r: 116 },
  { x: 744.5, y: 617.7, r: 146 },
];

const ANCHORS = ARTBOARD_CIRCLES.flatMap(({ x, y, r }, i) => [
  [x, y],
  ...(i === 2 ? [] : [[x, y - r]]),
  [x, y + r],
  [x - r, y],
  [x + r, y],
]);

const REGION = "M711.9 285.9A98.7 98.7 0 1 1 899.8 235.6A168 168 0 0 0 809.9 301.4A116 116 0 0 0 711.9 285.9Z";

const Drawing = () => (
  <svg width="100%" height="100%" aria-label="画稿">
    <defs>
      <clipPath id="region">
        <path d={REGION} />
      </clipPath>
    </defs>
    <g transform="translate(-74 -93)" fill="none">
      <rect x="478.5" y="80" width="2000" height="965" fill="#fff" stroke="#000" />
      <g stroke="#000" strokeWidth="2">
        {ARTBOARD_CIRCLES.map(({ x, y, r }) => (
          <circle key={`${x}${y}`} cx={x - 686.4} cy={y - 23.3} r={r} />
        ))}
        <path d="M1456 466C1457 620 1525 745 1622 779M1622 180 1600 218" />
      </g>
      {ARTBOARD_CIRCLES.map(({ x, y, r }) => (
        <g key={`${x}-${y}`}>
          <circle cx={x} cy={y} r={r} stroke="#1f2338" strokeWidth="2" />
          <circle cx={x} cy={y} r={r} stroke="#4f67b4" strokeWidth="1.2" />
        </g>
      ))}
      <path d={REGION} stroke="#f04e5e" strokeWidth="9" clipPath="url(#region)" />
      <g fill={c.anchor}>
        {ANCHORS.map(([x, y]) => (
          <rect key={`${x},${y}`} x={Math.floor(x - 2.5)} y={Math.floor(y - 2.5)} width="5" height="5" />
        ))}
      </g>
      <g stroke="#111" strokeWidth="1">
        <rect x="861.5" y="200.5" width="9" height="9" fill="#5580b0" />
        <rect x="880.5" y="200.5" width="10" height="9" fill="#fff" />
        <rect x="870.5" y="199.5" width="11" height="11" fill="#fff" />
        <path d="M872 209 880 201" stroke="#a03048" />
      </g>
      <path d="M880 218 886 225 880 228Z" fill="#111" />
      <path d="M886 235 893 228 900 234 892 241Z" fill="#000" />
      <path d="M887 226 900 231" stroke="#111" strokeWidth="2" strokeDasharray="3 1" />
      <path d="M894 230 900 232 901 238" stroke="#111" strokeWidth="2" />
    </g>
  </svg>
);

/* ---------- panels ---------- */

const PanelTabs = styled.div`
  display: flex;
  height: 27px;
  flex: none;
  background: ${c.bar};
  border-bottom: 1px solid #3b3b3b;
`;

const PanelTab = styled.button<{ $on?: boolean; $fold?: boolean }>`
  display: flex;
  align-items: center;
  gap: 4px;
  height: 27px;
  padding: 0 ${(p) => (p.$fold ? 8 : 9)}px 0 ${(p) => (p.$fold ? 5 : 9)}px;
  border-right: 1px solid #3b3b3b;
  background: ${(p) => (p.$on ? c.panel : "none")};
  color: ${(p) => (p.$on ? "#f0f0f0" : c.dim)};
`;

const MenuSlot = styled.span`
  display: flex;
  align-items: center;
  gap: 6px;
  margin-left: auto;
  padding-right: 5px;
  color: ${c.icon};
`;

const FoldMark = () => (
  <Svg w={6} h={9} box="0 0 6 9">
    <path d="M1 3.5 3 1.2 5 3.5M1 5.5 3 7.8 5 5.5" strokeWidth="1" />
  </Svg>
);

const PanelMenu = () => (
  <IconButton $w={12} aria-label="面板菜单">
    <Svg w={10} h={9} box="0 0 10 9">
      <path d="M0 .5H10M0 4.5H10M0 8.5H10" strokeWidth="1" />
    </Svg>
  </IconButton>
);

const Tabs = ({ items, fold }: { items: string[]; fold?: boolean }) => (
  <PanelTabs>
    {items.map((t, i) => (
      <PanelTab key={t} $on={i === 0} $fold={fold && i === 0}>
        {fold && i === 0 && <FoldMark />}
        {t}
      </PanelTab>
    ))}
    <MenuSlot>
      <PanelMenu />
    </MenuSlot>
  </PanelTabs>
);

const Panel = styled.section<{ $grow?: boolean }>`
  display: flex;
  flex-direction: column;
  flex: ${(p) => (p.$grow ? "1" : "none")};
  min-height: 0;
  border-bottom: ${(p) => (p.$grow ? "0" : `2px solid ${c.line}`)};
`;

const ListBox = styled.div<{ $h?: number; $top?: number }>`
  display: flex;
  flex-direction: column;
  margin: ${(p) => p.$top ?? 0}px 7px 0 5px;
  border: 1px solid #5e5e5e;
  ${(p) => (p.$h ? `min-height: ${p.$h}px;` : "flex: 1;")}
`;

const PanelFooter = styled.div<{ $h: number }>`
  display: flex;
  align-items: center;
  height: ${(p) => p.$h}px;
  flex: none;
  padding: 0 21px 0 5px;
`;

const ART: Record<string, React.ReactNode> = {
  library: (
    <>
      <path d="M2 2v11M5 3v10M8 2v11" strokeWidth="2" />
      <path d="m10 3 4 10" strokeWidth="2" />
      <path d="M14 12h4l-2 3Z" {...fill} />
    </>
  ),
  theme: (
    <>
      <circle cx="7" cy="8" r="3.5" />
      <path d="m9 6 3-3M9 10l3 3M7 8h2" />
      <circle cx="12" cy="3" r="1.5" {...fill} />
      <circle cx="12" cy="13" r="1.5" {...fill} />
    </>
  ),
  cloud: (
    <>
      <path d="M5 12C4 8 6 7 7 7c0-5 7-6 8-2 4 0 4 7 0 7.500H6Z" {...fill} />
      <path d="M-1 10H5M3 7l3 3-3 3" strokeWidth="2" />
    </>
  ),
  kinds: (
    <>
      <path d="M2 3H12V13H2ZM2 6h10M2 9.5h10M5.5 3V13M9 3V13" strokeWidth="1.6" />
      <path d="M13 12h4l-2 3Z" {...fill} />
    </>
  ),
  options: <path d="M3 3H14V13.5H3ZM3 5h11M5 8h1M7 8h5M5 11h1M7 11h5" strokeWidth="1.2" />,
  folder: <path d="M1 3H6L8 5h6v8.500H1Z" {...fill} />,
  fresh: <path d="M3 3H13V13H8V8H3ZM3 9.500H6.500V13Z" {...fill} />,
  trash: <path d="M3 4.5H13M6 4V2.5h4V4M4 5v8.500h8V5M6.5 6v6M8 6v6M9.5 6v6" strokeWidth="1" />,
  cut: <path d="m3 3 10 10M13 3 3 13" strokeWidth="2" />,
  ccfolder: (
    <>
      <path d="M0 2H5l2 2h5v3L6 12H0Z" {...fill} />
      <circle cx="9" cy="10" r="3.5" fill="#666" />
      <circle cx="13" cy="10.5" r="3" fill="#666" />
      <path d="m7.500 9 5 3.500" />
    </>
  ),
  exportOut: <path d="M7 3.500H3V14H13.500V10M10 2.500h4V7M14 2.500 8 8.500" strokeWidth="1.3" />,
  find: (
    <>
      <circle cx="9.5" cy="6" r="4" />
      <path d="M6.5 9 3 13.500" strokeWidth="2.5" />
    </>
  ),
  mask: (
    <>
      <path d="M3 3h8v8H3Z" strokeWidth="1.5" />
      <path d="M6 6h8v8H6Z" strokeWidth="1" opacity=".6" />
      <path d="M6 6h5v5H6Z" {...fill} />
    </>
  ),
  sublayer: (
    <>
      <path d="M6 4H15V14H11V9H6ZM6 10H10V14Z" {...fill} />
      <path d="M1 2V6H6M4 3.500 6.500 6 4 8.500" strokeWidth="1.2" />
    </>
  ),
};

const FootIcon = ({ art, name, off }: { art: string; name: string; off?: boolean }) => (
  <IconButton $w={26} $h={16} $off={off} aria-label={name}>
    <Svg w={20} h={16} box="-2 0 20 16">
      {ART[art]}
    </Svg>
  </IconButton>
);

/* colour */

const ColorBody = styled.div`
  display: flex;
  flex-direction: column;
  gap: 10px;
  padding: 9px 18px 7px 5px;
`;

const QuickSwatches = styled.div`
  display: flex;
  width: 41px;
  height: 14px;
  border: 1px solid #2b2b2b;
`;

const Quick = styled.button<{ $bg: string }>`
  flex: 1;
  background: ${(p) => p.$bg};
  overflow: hidden;
`;

const Spectrum = styled.div`
  display: grid;
  height: 164px;
  margin-left: 1px;
  border: 1px solid #2c2c2c;
  background: linear-gradient(90deg, #e60012 0%, #f08a1c 10%, #f6ea28 17%, #a8cc30 25%, #68b82c 34%, #68bc8c 44%, #62c0cc 51%, #40b0ec 55%, #1d4ea4 66%, #6a4aa0 76%, #a8509e 84%, #ec1c8c 92%, #e60020 100%);
  &::before,
  &::after {
    content: "";
    grid-area: 1 / 1;
  }
  &::before {
    background: linear-gradient(90deg, #b00012 0%, #b05808 9%, #a8a810 17%, #22a030 32%, #10a050 42%, #089890 50%, #0080a8 55%, #00309c 64%, #3a2090 74%, #a0088c 84%, #b80060 92%, #d00018 100%);
    mask-image: linear-gradient(transparent 46%, #000 68%);
  }
  &::after {
    background: linear-gradient(#fff 0%, rgba(255, 255, 255, 0.78) 12%, rgba(255, 255, 255, 0.35) 32%, transparent 54%, transparent 60%, rgba(0, 0, 0, 0.55) 76%, #000 99%);
  }
`;

/* swatches */

const SwatchHead = styled.div`
  display: flex;
  justify-content: space-between;
  align-items: flex-start;
  padding: 7px 7px 4px 5px;
`;

const ViewToggle = styled.div`
  display: flex;
  border: 1px solid #616161;
`;

const ViewButton = styled.button<{ $on?: boolean }>`
  display: grid;
  place-items: center;
  width: 23px;
  height: 21px;
  color: ${(p) => (p.$on ? "#fff" : c.icon)};
  background: ${(p) => (p.$on ? "#2d2d2d" : "none")};
`;

const SwatchRow = styled.div<{ $top?: number }>`
  display: flex;
  gap: 1px;
  height: 13px;
  margin-top: ${(p) => p.$top ?? 1}px;
  color: ${c.icon};
`;

const Swatch = styled.button<{ $bg: string }>`
  display: grid;
  place-items: center;
  width: 13px;
  height: 13px;
  background: ${(p) => p.$bg};
`;

const ROW_ONE = ["#ffffff", "#050000", "#e71818", "#f0e83c", "#69b52f", "#70c4d4", "#1f4aa0", "#a7549b", "#b22832", "#d8202a", "#e2562a", "#ec8a2a", "#f2a640"];
const ROW_TWO = ["#f2e43a", "#ced23a", "#86bc44", "#38aa50", "#1f8f48", "#156838", "#28a874", "#20a098", "#2c9fd0", "#1168b0", "#2a2d86", "#202a50", "#5a2a88", "#862488", "#981c58"];
const ROW_THREE = [
  "#c81c58", "#dc2478", "#c2b09a", "#958478", "#726158", "#54463f", "#c49c6c", "#a27c54", "#88623a", "#744e28", "#5e3a1c", "#3e200e",
  "linear-gradient(90deg,#fff,#111)",
  "linear-gradient(90deg,#ec7a28,#e8c820)",
  "linear-gradient(90deg,#50b4cc,rgba(255,255,255,.2)),repeating-conic-gradient(#ddd 0 25%,#fff 0 50%) 0 0/4px 4px",
];
const BRIGHTS = ["#68bcc4", "#7c80bc", "#b096c4"];
const GRAYS = ["#0a0204", "#1c1c1c", "#303030", "#4a4a4a", "#646464", "#7e7e7e", "#989898", "#b2b2b2", "#cccccc", "#e4e4e4", "#f4f4f4"];

const Folder = () => (
  <Svg w={13} box="0 0 13 13">
    <path d="M1 3H5.500L7 5h5v6.500H1Z" {...fill} />
  </Svg>
);

const SwatchList = ({ colors }: { colors: string[] }) => (
  <>
    {colors.map((bg) => (
      <Swatch key={bg} $bg={bg} aria-label="色板" />
    ))}
  </>
);

/* guide */

const GuideBody = styled.div`
  display: flex;
  align-items: center;
  gap: 15px;
  padding: 8px 5px 14px;
  color: ${c.icon};
`;

const BaseColor = styled.button`
  width: 21px;
  height: 21px;
  border: 1px solid #000;
  background: #fff;
  padding: 2px;
  &::before {
    content: "";
    display: block;
    height: 100%;
    border: 1px solid #000;
  }
`;

/* brushes */

const BrushTiles = styled.div`
  display: flex;
  gap: 1px;
`;

const BrushTile = styled.button`
  display: grid;
  place-items: center;
  width: 32px;
  height: 32px;
  background: #e3e3e3;
`;

const Dot = styled.span<{ $d: number }>`
  width: ${(p) => p.$d}px;
  height: ${(p) => p.$d}px;
  border-radius: 50%;
  background: #000;
`;

const BrushRow = styled.button`
  display: flex;
  align-items: center;
  width: 214px;
  height: 32px;
  margin-top: 1px;
  background: #e3e3e3;
  color: #333;
`;

const BasicBrush = styled(BrushRow)`
  gap: 5px;
  padding: 0 5px;
  &::before {
    content: "";
    flex: 1;
    height: 2px;
    background: #000;
  }
`;

const BristleBrush = styled(BrushRow)`
  padding-left: 8px;
  gap: 10px;
  color: #222;
  font: 10px/14px ${mono};
`;

const charcoal = Array.from({ length: 240 }, (_, i) => {
  const n = Math.abs(Math.sin(i * 12.9898) * 43758.5453) % 1;
  const m = Math.abs(Math.sin(i * 78.233) * 12543.123) % 1;
  const t = i / 240;
  const spread = t < 0.7 ? 4.4 : 4 * (1 - t) + 1.5;
  const len = t < 0.75 ? 6 : 3 * n;
  return `M${(8 + t * 192).toFixed(1)} ${(16 - t * 1.5 + (m - 0.5) * spread).toFixed(1)}h${len.toFixed(1)}`;
}).join("");

/* layers */

const LayerRow = styled.div`
  display: flex;
  align-items: center;
  height: 21px;
  background: #50627a;
  color: #dcdcdc;
`;

const LayerMark = styled.span`
  width: 3px;
  height: 19px;
  margin: 0 7px 0 23px;
  background: #5c82f0;
`;

const LayerName = styled.span`
  margin-left: 6px;
  flex: 1;
`;

const TargetSquare = styled.span`
  width: 6px;
  height: 6px;
  margin: 0 3px 0 6px;
  border: 1px solid #111;
  background: #4f74dc;
`;

const SelectedCorner = styled.span`
  align-self: flex-start;
  width: 6px;
  height: 6px;
  background: linear-gradient(to top right, transparent 50%, #d8d8d8 50%);
`;

const LayerCount = styled.span`
  font: 10px/16px ${mono};
  color: #d4d4d4;
`;

const RightColumn = styled.aside`
  display: flex;
  flex-direction: column;
  min-height: 0;
  border-left: 3px solid ${c.line};
`;

const RightPanels = () => (
  <RightColumn>
    <StripHeader $end $pad={6}>
      <Collapse right />
    </StripHeader>

    <Panel>
      <Tabs items={["颜色"]} fold />
      <ColorBody>
        <QuickSwatches>
          <Quick $bg="#fff" aria-label="无">
            <NoneSwatch w={13} h={12} />
          </Quick>
          <Quick $bg="#000" aria-label="黑色" />
          <Quick $bg="#fff" aria-label="白色" />
        </QuickSwatches>
        <Spectrum />
      </ColorBody>
    </Panel>

    <Panel>
      <Tabs items={["色板", "库"]} />
      <SwatchHead>
        <Proxy size={20} shift={10} />
        <ViewToggle>
          <ViewButton aria-label="列表视图">
            <Svg w={12} h={14} box="0 0 12 14">
              <path d="M0 1H12M0 5H12M0 9H12M0 13H12" strokeWidth="2" />
            </Svg>
          </ViewButton>
          <ViewButton $on aria-label="缩览图视图">
            <Svg w={14} box="0 0 14 14">
              <path d="M0 0H4V4H0ZM5 0H9V4H5ZM10 0h4V4H10ZM0 5H4V9H0ZM5 5H9V9H5ZM10 5h4V9H10ZM0 10H4v4H0ZM5 10H9v4H5ZM10 10h4v4H10Z" {...fill} />
            </Svg>
          </ViewButton>
        </ViewToggle>
      </SwatchHead>
      <ListBox $h={143}>
        <SwatchRow $top={0}>
          <Swatch $bg="#fff" aria-label="无">
            <Svg w={13} box="0 0 13 13">
              <path d="M2.500 10.500 10.500 2.500" stroke="#e01010" strokeWidth="2.5" />
              <path d="M1.5 1.5h10v10h-10Z" stroke="#000" strokeWidth="1" />
            </Svg>
          </Swatch>
          <Swatch $bg="#d8d8d8" aria-label="套版色">
            <Svg w={13} box="0 0 13 13">
              <circle cx="6.5" cy="6.5" r="4.5" stroke="#444" strokeWidth="1" />
              <path d="M6.5 0V13M0 6.5H13" stroke="#444" strokeWidth="1" />
            </Svg>
          </Swatch>
          <SwatchList colors={ROW_ONE} />
        </SwatchRow>
        <SwatchRow>
          <SwatchList colors={ROW_TWO} />
        </SwatchRow>
        <SwatchRow>
          <SwatchList colors={ROW_THREE} />
        </SwatchRow>
        <SwatchRow>
          <Swatch $bg="#2a5c9c" aria-label="图案">
            <Svg w={13} box="0 0 13 13">
              <path d="M1 2 4 4M6 1l1 3M10 2l2 2M2 7l2 2M7 7l3-1M11 8v3M4 11l3 1M9 10l-1 2M0 11h2M8 4h2" stroke="#9cc0e4" strokeWidth="1.3" />
            </Svg>
          </Swatch>
        </SwatchRow>
        <SwatchRow $top={3}>
          <Folder />
          <SwatchList colors={BRIGHTS} />
        </SwatchRow>
        <SwatchRow $top={3}>
          <Folder />
          <SwatchList colors={GRAYS} />
        </SwatchRow>
      </ListBox>
      <PanelFooter $h={21}>
        <FootIcon art="library" name="色板库" />
        <FootIcon art="theme" name="颜色主题" />
        <FootIcon art="cloud" name="添加到库" />
        <PushRight>
          <FootIcon art="kinds" name="色板类型" />
          <FootIcon art="options" name="色板选项" off />
          <FootIcon art="folder" name="新建颜色组" />
          <FootIcon art="fresh" name="新建色板" off />
          <FootIcon art="trash" name="删除色板" off />
        </PushRight>
      </PanelFooter>
    </Panel>

    <Panel>
      <Tabs items={["颜色参考"]} fold />
      <GuideBody>
        <BaseColor aria-label="基色" />
        <Group $gap={9}>
          <ColorWheel size={17} />
          <Svg w={17} h={12} box="0 0 17 12">
            <path d="M0 9H6M3 6v6" strokeWidth="2" />
            <path d="M4 6V1H16V9.500H8M8.500 1V9M12.500 1V9" strokeWidth="1" />
            <path d="M9 2h3V9H9Z" fill="#8a8a8a" stroke="none" />
          </Svg>
        </Group>
      </GuideBody>
    </Panel>

    <Panel>
      <Tabs items={["画笔", "描边", "符号"]} />
      <ListBox $h={178} $top={6}>
        <BrushTiles>
          {[3, 10, 2, 12].map((d) => (
            <BrushTile key={d} aria-label={`${d} pt. 圆形`}>
              <Dot $d={d} />
            </BrushTile>
          ))}
        </BrushTiles>
        <BasicBrush>基本</BasicBrush>
        <BrushRow aria-label="图案画笔">
          <svg width="214" height="32" viewBox="0 0 214 32" aria-hidden="true">
            <path d="M5 5H104V0H126V27H28V32H5Z" fill="#9dadc9" />
            <path d="M20 32V20H119V0H126V27H28V32Z" fill="#8295b3" />
            <path d="M20 32V19.500H119V1" fill="none" stroke="#dde4ee" strokeWidth="1.5" />
            <path d="M32.5 5V27M65.5 5V27M98.5 5V27" stroke="#e3e3e3" />
            <path d="M32.5 0V3M65.5 0V3M98.5 0V3M131.5 0V3M164.5 0V3M32.5 29V32M65.5 29V32M98.5 29V32M131.5 29V32M164.5 29V32" stroke="#111" />
          </svg>
        </BrushRow>
        <BristleBrush>
          <Svg w={14} h={10} box="0 0 14 10">
            <path d="M.5 .5H13.500V9.500H.5ZM3.500 0V10" strokeWidth="1" />
          </Svg>
          3.00
          <svg width="132" height="20" viewBox="0 0 132 20" aria-hidden="true">
            <path d="M17 10C58-8 86 28 127 10" fill="none" stroke="#606060" strokeWidth="2.5" strokeLinecap="round" />
          </svg>
        </BristleBrush>
        <BrushRow aria-label="炭笔">
          <svg width="214" height="32" viewBox="0 0 214 32" aria-hidden="true">
            <path d={charcoal} stroke="#1a1a1a" strokeWidth="1.3" />
          </svg>
        </BrushRow>
      </ListBox>
      <PanelFooter $h={20}>
        <FootIcon art="library" name="画笔库" />
        <FootIcon art="ccfolder" name="库面板" />
        <PushRight>
          <FootIcon art="cut" name="移去画笔描边" off />
          <FootIcon art="options" name="所选对象的选项" off />
          <FootIcon art="fresh" name="新建画笔" />
          <FootIcon art="trash" name="删除画笔" off />
        </PushRight>
      </PanelFooter>
    </Panel>

    <Panel $grow>
      <Tabs items={["图层"]} />
      <ListBox $top={6}>
        <LayerRow>
          <IconButton $w={20} aria-label="切换可视性">
            <Svg w={12} h={9} box="0 0 12 9">
              <path d="M0 4.500C3-1 9-1 12 4.500 9 10 3 10 0 4.500Z" {...fill} />
              <circle cx="6" cy="4.5" r="2.3" fill="#50627a" stroke="none" />
              <circle cx="6" cy="4.5" r="1.2" {...fill} />
            </Svg>
          </IconButton>
          <LayerMark />
          <Chevron dir="right" />
          <Group $ml={11}>
            <Svg w={18} box="0 0 18 18">
              <rect x=".5" y=".5" width="17" height="17" fill="#fff" stroke="#000" />
              <path d="M8 4h2M7 6h3M3 11h2M6 12h4M8 10v4M3 13h2M14 10v4M16 10v3" stroke="#666" strokeWidth="1" />
            </Svg>
          </Group>
          <LayerName>图层 1</LayerName>
          <Svg w={9} box="0 0 9 9">
            <circle cx="4.5" cy="4.5" r="3.7" strokeWidth="1" />
          </Svg>
          <TargetSquare />
          <SelectedCorner />
        </LayerRow>
      </ListBox>
      <PanelFooter $h={20}>
        <LayerCount>1...</LayerCount>
        <PushRight>
          <FootIcon art="exportOut" name="收集以导出" />
          <FootIcon art="find" name="定位对象" />
          <FootIcon art="mask" name="建立剪切蒙版" />
          <FootIcon art="sublayer" name="新建子图层" />
          <FootIcon art="fresh" name="新建图层" />
          <FootIcon art="trash" name="删除图层" off />
        </PushRight>
      </PanelFooter>
    </Panel>
  </RightColumn>
);

/* ---------- icon dock ---------- */

const Dock = styled.aside`
  display: flex;
  flex-direction: column;
  border-left: 3px solid ${c.line};
`;

const DockGroup = styled.div`
  display: flex;
  flex-direction: column;
  align-items: center;
  padding-bottom: 3px;
  border-bottom: 1px solid ${c.line};
`;

const DockButton = styled.button<{ $on?: boolean }>`
  display: grid;
  place-items: center;
  width: 28px;
  height: 22px;
  margin: 3px 0;
  color: ${c.icon};
  background: ${(p) => (p.$on ? "#303030" : "none")};
`;

const DOCK: { name: string; on?: boolean; art: React.ReactNode }[][] = [
  [
    {
      name: "导航器",
      art: (
        <>
          <circle cx="10" cy="10" r="6" strokeWidth="2" />
          <circle cx="10" cy="10" r="2" />
          <path d="M10 1V19M1 10H19M4 4 16 16M16 4 4 16" strokeWidth="1.2" />
        </>
      ),
    },
    {
      name: "信息",
      art: (
        <>
          <circle cx="10" cy="10" r="8" {...fill} />
          <path d="M10 4.500v2.500M8 9h2.500v5M7.500 14.500h5.500" stroke="#4a4a4a" strokeWidth="2.2" />
        </>
      ),
    },
  ],
  [
    {
      name: "外观",
      art: (
        <>
          <circle cx="10" cy="10" r="6" {...fill} />
          <circle cx="10" cy="10" r="8" strokeDasharray="2 2" strokeWidth="1.2" />
        </>
      ),
    },
    {
      name: "图形样式",
      art: <path d="M5 8V3H18.500V16H10M2 9h5v5H2ZM4.500 14v3.500H9.500V12H7" strokeWidth="1.4" />,
    },
  ],
  [
    {
      name: "渐变",
      on: true,
      art: (
        <>
          <defs>
            <linearGradient id="dockGrad">
              <stop offset="0" stopColor="#333" />
              <stop offset="1" stopColor="#e8e8e8" />
            </linearGradient>
          </defs>
          <path d="M2 4.500H18v11H2Z" fill="url(#dockGrad)" strokeWidth="1.3" />
        </>
      ),
    },
    {
      name: "透明度",
      art: (
        <>
          <circle cx="7.5" cy="7.5" r="6" {...fill} />
          <circle cx="12.5" cy="12.5" r="5.5" fill="#7b7b7b" strokeWidth="1.2" />
        </>
      ),
    },
  ],
  [
    {
      name: "变换",
      art: (
        <>
          <path d="M4 4H16V16H4Z" strokeWidth="1.3" />
          <path d="M2 3H6V6H2ZM8 2h4v3H8ZM14 3h4V6H14ZM2 8H5v4H2ZM15 8h3v4H15ZM2 14H6v4H2ZM8 15h4v3H8ZM14 14h4v4H14ZM9 9h2v2H9Z" {...fill} />
        </>
      ),
    },
    {
      name: "对齐",
      art: (
        <>
          <path d="M3 1V19" />
          <path d="M5 3h7v6H5ZM5 11H17v5H5Z" {...fill} />
        </>
      ),
    },
    { name: "路径查找器", art: <path fillRule="evenodd" d="M2 2H12V6H18V17H8V12H2ZM7 7H12V12H8V7Z" {...fill} /> },
  ],
  [
    {
      name: "资源导出",
      art: <path d="M9 3H2V18H17V11M12 2.500h6V9M18 2.500 11 10" strokeWidth="2" />,
    },
  ],
];

const IconDock = () => (
  <Dock>
    <StripHeader $end>
      <Collapse />
    </StripHeader>
    {DOCK.map((g, i) => (
      <DockGroup key={i}>
        <GripRow>
          <Grip />
        </GripRow>
        {g.map((b) => (
          <DockButton key={b.name} $on={b.on} aria-label={b.name}>
            <Svg w={20}>{b.art}</Svg>
          </DockButton>
        ))}
      </DockGroup>
    ))}
  </Dock>
);

/* ---------- floating gradient panel ---------- */

const Floating = styled.section`
  position: absolute;
  top: 148px;
  right: 0;
  width: 231px;
  background: ${c.panel};
  border: 1px solid ${c.line};
  border-top-width: 4px;
  box-shadow: 0 1px 4px rgba(0, 0, 0, 0.35);
`;

const GradientBody = styled.div`
  display: grid;
  grid-template-columns: 46px 1fr;
  padding: 6px 5px 0;
`;

const LeftStack = styled.div`
  display: flex;
  flex-direction: column;
  gap: 6px;
`;

const PreviewRow = styled.div`
  display: flex;
  align-items: center;
  gap: 3px;
  color: ${c.icon};
`;

const GradientPreview = styled.button`
  width: 32px;
  height: 32px;
  border: 1px solid #2b2b2b;
  background: linear-gradient(90deg, #fff, #333);
`;

const OptionGrid = styled.div`
  display: grid;
  grid-template-columns: 52px auto;
  grid-template-rows: 23px 24px 20px 21px;
  row-gap: 5px;
  align-items: center;
  justify-items: start;
`;

const OptionLabel = styled.label<{ $off?: boolean }>`
  justify-self: end;
  line-height: 16px;
  white-space: nowrap;
  color: ${(p) => (p.$off ? "#717171" : "#d6d6d6")};
`;

const TypeGroup = styled.div`
  display: flex;
  border: 1px solid #636363;
`;

const TypeButton = styled.button<{ $bg: string }>`
  display: grid;
  place-items: center;
  width: 24px;
  height: 21px;
  & + & {
    border-left: 1px solid #636363;
    width: 25px;
  }
  &::before {
    content: "";
    width: 16px;
    height: 16px;
    border: 1px solid #d8d8d8;
    background: ${(p) => p.$bg};
  }
`;

const AlignButton = styled.button`
  display: grid;
  place-items: center;
  width: 22px;
  height: 19px;
  color: #7a7a7a;
  & + & {
    border-left: 1px solid #5c5c5c;
    width: 23px;
  }
`;

const SliderRow = styled.div`
  display: flex;
  align-items: center;
  gap: 11px;
  padding: 17px 0 0 15px;
`;

const GradientBar = styled.span`
  width: 178px;
  height: 16px;
  border: 1px solid #2f2f2f;
  background: linear-gradient(90deg, #fff, #777 62%, #000);
`;

const StopGrid = styled.div`
  display: grid;
  grid-template-columns: 40px 58px auto;
  grid-template-rows: 21px 21px;
  row-gap: 5px;
  align-items: center;
  justify-items: start;
  padding: 17px 0 5px 5px;
  color: #7e7e7e;
`;

const Dropper = styled.button`
  grid-row: 1 / 3;
  padding-left: 6px;
`;

const PanelFoot = styled.div`
  display: grid;
  place-items: center;
  height: 9px;
  border-top: 2px solid ${c.line};
`;

const VRule = styled.span`
  width: 1px;
  height: 11px;
  background: #8a8a8a;
`;

const OffSelect = ({ id }: { id: string }) => (
  <SelectFrame $w={70} $chev={20} $off>
    <select id={id} disabled />
    <Chevron size={9} />
  </SelectFrame>
);

const GradientPanel = () => (
  <Floating>
    <PanelTabs>
      <PanelTab $on $fold>
        <FoldMark />
        渐变
      </PanelTab>
      <PanelTab>透明度</PanelTab>
      <MenuSlot>
        <Svg w={10} h={8} box="0 0 10 8">
          <path d="M1 0 5 4 1 8M5.500 0 9.500 4 5.500 8" strokeWidth="1.4" />
        </Svg>
        <VRule />
        <PanelMenu />
      </MenuSlot>
    </PanelTabs>
    <GradientBody>
      <LeftStack>
        <PreviewRow>
          <GradientPreview aria-label="渐变预览" />
          <Svg w={6} h={4} box="0 0 6 4">
            <path d="M0 0H6L3 4Z" {...fill} />
          </Svg>
        </PreviewRow>
        <Proxy size={20} shift={10} />
        <IconButton $w={26} $off aria-label="反向渐变">
          <Svg w={16} box="0 0 16 16">
            <path d="M1 2H9V6H1ZM6 10h8v4H6Z" strokeWidth="1.2" />
            <path d="M11 3h4l-2 3ZM1 13h4L3 10ZM5 2H9V6H5Z" {...fill} />
          </Svg>
        </IconButton>
      </LeftStack>
      <OptionGrid>
        <OptionLabel as="span">类型：</OptionLabel>
        <TypeGroup>
          <TypeButton $bg="linear-gradient(90deg,#444,#ddd)" aria-label="线性渐变" />
          <TypeButton $bg="radial-gradient(#ddd,#444)" aria-label="径向渐变" />
          <TypeButton $bg="linear-gradient(160deg,#333 25%,#eee 50%,#333 95%)" aria-label="任意形状渐变" />
        </TypeGroup>
        <OptionLabel as="span" $off>
          描边：
        </OptionLabel>
        <TypeGroup>
          <AlignButton disabled aria-label="在描边中应用渐变">
            <Svg w={15} box="0 0 15 15">
              <path d="M1 15V1H14M5 15V5M10 8h5" strokeWidth="1.2" />
              <path d="M5 2h9v5H9Z" {...fill} />
            </Svg>
          </AlignButton>
          <AlignButton disabled aria-label="沿描边应用渐变">
            <Svg w={15} box="0 0 15 15">
              <path d="M1 1H14M7 8h8M1 15V8M8 15V8" strokeWidth="1.2" />
              <path d="M1 1 8 8H1Z" {...fill} />
            </Svg>
          </AlignButton>
          <AlignButton disabled aria-label="跨描边应用渐变">
            <Svg w={15} box="0 0 15 15">
              <path d="M1 15V1H14" strokeWidth="1" />
              <path d="M5 15V5H15" strokeWidth="3" />
            </Svg>
          </AlignButton>
        </TypeGroup>
        <OptionLabel $off htmlFor="angle" aria-label="角度">
          <Svg w={17} h={13} box="0 0 17 13">
            <path d="M15 12H1L11 1M8 5c3 1 3 4 3 7" stroke="#959595" strokeWidth="1.2" />
          </Svg>
        </OptionLabel>
        <OffSelect id="angle" />
        <OptionLabel $off htmlFor="aspect" aria-label="长宽比">
          <Svg w={18} h={14} box="0 0 18 14">
            <path d="M2 1V11M0 3 2 1 4 3M0 9l2 2 2-2M5 13H16M5 11v3M16 11v3" stroke="#959595" strokeWidth="1.2" />
            <ellipse cx="11" cy="5.5" rx="5" ry="3.5" stroke="#959595" strokeWidth="1.2" />
          </Svg>
        </OptionLabel>
        <OffSelect id="aspect" />
      </OptionGrid>
    </GradientBody>
    <SliderRow>
      <GradientBar />
      <IconButton $off $w={16} aria-label="删除色标">
        <Svg w={16} box="0 0 16 16">
          {ART.trash}
        </Svg>
      </IconButton>
    </SliderRow>
    <StopGrid>
      <Dropper aria-label="拾色器" disabled>
        <Svg w={18} box="0 0 20 20">
          <DropperArt />
        </Svg>
      </Dropper>
      <OptionLabel $off htmlFor="stopOpacity">
        不透明度：
      </OptionLabel>
      <OffSelect id="stopOpacity" />
      <OptionLabel $off htmlFor="stopPlace">
        位置：
      </OptionLabel>
      <OffSelect id="stopPlace" />
    </StopGrid>
    <PanelFoot>
      <Grip />
    </PanelFoot>
  </Floating>
);

const CloseTab = () => (
  <IconButton $w={10} aria-label="关闭文档">
    <Svg w={7} box="0 0 7 7">
      <path d="M1 1 6 6M6 1 1 6" strokeWidth="1.8" stroke="#e8e8e8" />
    </Svg>
  </IconButton>
);

const Nav = ({ flip, bar, name }: { flip?: boolean; bar?: boolean; name: string }) => (
  <IconButton $w={17} $h={16} $off aria-label={name}>
    <Svg w={8} box="0 0 8 8">
      <g transform={flip ? "rotate(180 4 4)" : undefined}>
        <path d="M1 0 6 4 1 8Z" {...fill} />
        {bar && <path d="M7.300 0V8" />}
      </g>
    </Svg>
  </IconButton>
);

export default function App() {
  return (
    <Shell>
      <GlobalStyle />
      <TopMenu />
      <ControlStrip />
      <Workspace>
        <Toolbox />
        <DocumentArea>
          <TabStrip>
            <DocTab>
              <span>未标题-2* @ 131.09% (CMYK/GPU 预览)</span>
              <CloseTab />
            </DocTab>
          </TabStrip>
          <Stage>
            <Canvas>
              <Drawing />
            </Canvas>
            <VScroll>
              <Chevron dir="up" />
              <Spacer />
              <VThumb />
              <Spacer />
              <Chevron />
            </VScroll>
          </Stage>
          <StatusBar>
            <MonoSelectFrame $w={69} $h={16}>
              <select aria-label="缩放级别" defaultValue="131.09%">
                <option>131.09%</option>
              </select>
              <Chevron />
            </MonoSelectFrame>
            <Group $ml={5}>
              <Nav flip bar name="首项" />
              <Nav flip name="上一项" />
            </Group>
            <Group $ml={1}>
              <MonoSelectFrame $w={60} $h={16}>
                <select aria-label="画板" defaultValue="1">
                  <option>1</option>
                </select>
                <Chevron />
              </MonoSelectFrame>
            </Group>
            <Group $ml={3}>
              <Nav name="下一项" />
              <Nav bar name="末项" />
            </Group>
            <StatusText>实时上色工具</StatusText>
            <IconButton $w={14} $h={16} aria-label="状态栏选项">
              <Svg w={8} box="0 0 8 8">
                <path d="M1 0 6 4 1 8Z" fill="#e4e4e4" stroke="none" />
              </Svg>
            </IconButton>
            <HScroll>
              <Chevron dir="left" />
              <Spacer $n={19} />
              <HThumb />
              <Spacer $n={20} />
              <Chevron dir="right" />
            </HScroll>
          </StatusBar>
          <GradientPanel />
        </DocumentArea>
        <IconDock />
        <RightPanels />
      </Workspace>
    </Shell>
  );
}
